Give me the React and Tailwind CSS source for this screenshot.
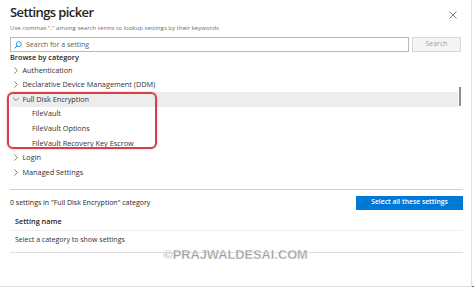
import React from 'react';

const topRows = ['Authentication', 'Declarative Device Management (DDM)'];
const fileVault = ['FileVault', 'FileVault Options', 'FileVault Recovery Key Escrow'];
const bottomRows = ['Login', 'Managed Settings'];

const Chevron = ({ open }) => (
  <svg width="6" height="7" viewBox="0 0 6 7" className="shrink-0 text-[#605e5c]">
    {open ? (
      <path d="M0.2 1.8 L3 4.6 L5.8 1.8" fill="none" stroke="currentColor" strokeWidth="0.8" />
    ) : (
      <path d="M1.4 0.4 L4.4 3.5 L1.4 6.6" fill="none" stroke="currentColor" strokeWidth="0.8" />
    )}
  </svg>
);

const TreeRow = ({ label, open, selected, child }) => (
  <div className={`flex h-[14.6px] items-center ${child ? 'pl-[22px]' : 'pl-[3px]'} ${selected ? 'bg-[#ededed]' : ''}`}>
    {!child && <Chevron open={open} />}
    <span className={`${child ? '' : 'ml-[3.5px]'} text-[7.3px] leading-none text-[#323130]`}>{label}</span>
  </div>
);

export default function App() {
  return (
    <div className="flex h-[288px] w-[474px] overflow-hidden bg-white" style={{ fontFamily: '"Open Sans", "Noto Sans", sans-serif' }}>
      <div className="relative flex h-[287px] w-[472px] flex-col border-r border-b border-[#e3e3e3] pl-[10px] pr-[8px]">
        <div className="flex items-start justify-between pt-[3px]">
          <h1 className="text-[13px] font-semibold leading-[18px] tracking-[-0.6px] text-[#252423]">Settings picker</h1>
          <svg width="8" height="8" viewBox="0 0 8 8" className="mr-[6px] mt-[8px] text-[#605e5c]">
            <path d="M0.5 0.5 L7.5 7.5 M7.5 0.5 L0.5 7.5" stroke="currentColor" strokeWidth="0.8" />
          </svg>
        </div>
        <p className="mt-[3px] text-[6.1px] leading-[8px] text-[#706e6b]">Use commas "," among search terms to lookup settings by their keywords</p>
        <div className="mr-[2px] mt-[5px] flex h-[15px] gap-[3px]">
          <div className="flex flex-1 items-center gap-[4px] border border-[#b9b9b9] pl-[3px]">
            <svg width="8" height="8" viewBox="0 0 10 10" className="text-[#0078d4]">
              <circle cx="6" cy="4" r="3.1" fill="none" stroke="currentColor" strokeWidth="1" />
              <path d="M3.8 6.2 L0.8 9.2" stroke="currentColor" strokeWidth="1.1" />
            </svg>
            <span className="text-[7px] leading-none text-[#605e5c]">Search for a setting</span>
          </div>
          <div className="flex w-[49px] items-center justify-center border border-[#d8d8d8] bg-[#f4f4f4] text-[7px] text-[#a19f9d]">Search</div>
        </div>
        <div className="text-[7.3px] font-semibold leading-[11px] text-[#252423]">Browse by category</div>
        <div className="flex">
          <div className="flex-1">
            {topRows.map((r) => <TreeRow key={r} label={r} />)}
            <div className="relative">
              <TreeRow label="Full Disk Encryption" open selected />
              {fileVault.map((r) => <TreeRow key={r} label={r} child />)}
              <div className="pointer-events-none absolute left-[-3px] top-[0px] h-[57px] w-[150px] rounded-[6px] border-2 border-[#d6404a] shadow-[0_0_2px_rgba(214,64,74,0.5)]" />
            </div>
            {bottomRows.map((r) => <TreeRow key={r} label={r} />)}
          </div>
          <div className="ml-[1px] w-[2px] pt-[24px]">
            <div className="h-[19px] w-[1.5px] bg-[#8f8f8f]" />
          </div>
          <div className="w-[2px]" />
        </div>
        <div className="mt-[9px] border-t border-[#cfcfcf]" />
        <div className="mt-[6px] flex h-[14px] items-center justify-between">
          <span className="text-[7px] leading-none text-[#252423]">0 settings in "Full Disk Encryption" category</span>
          <div className="flex h-[14px] w-[107px] items-center justify-center bg-[#0078d4] text-[6.8px] font-semibold leading-none text-white">Select all these settings</div>
        </div>
        <div className="border-b border-[#efefef] pb-[4px] pl-[5px] pt-[6px] text-[7.3px] font-semibold leading-[10px] text-[#252423]">Setting name</div>
        <div className="border-b border-[#dedede] pb-[7px] pl-[5px] pt-[3px] text-[7px] leading-[11px] text-[#323130]">Select a category to show settings</div>
        <div className="pointer-events-none absolute left-0 right-0 top-[248px] text-center text-[12.8px] font-bold leading-[14px] text-[#9d9d9d]" style={{ fontFamily: '"Liberation Sans", Arial, sans-serif', WebkitTextStroke: '0.3px #ffffff' }}>
          ©PRAJWALDESAI.COM
        </div>
      </div>
      <div className="h-[287px] flex-1 border-b border-[#555]" />
    </div>
  );
}
